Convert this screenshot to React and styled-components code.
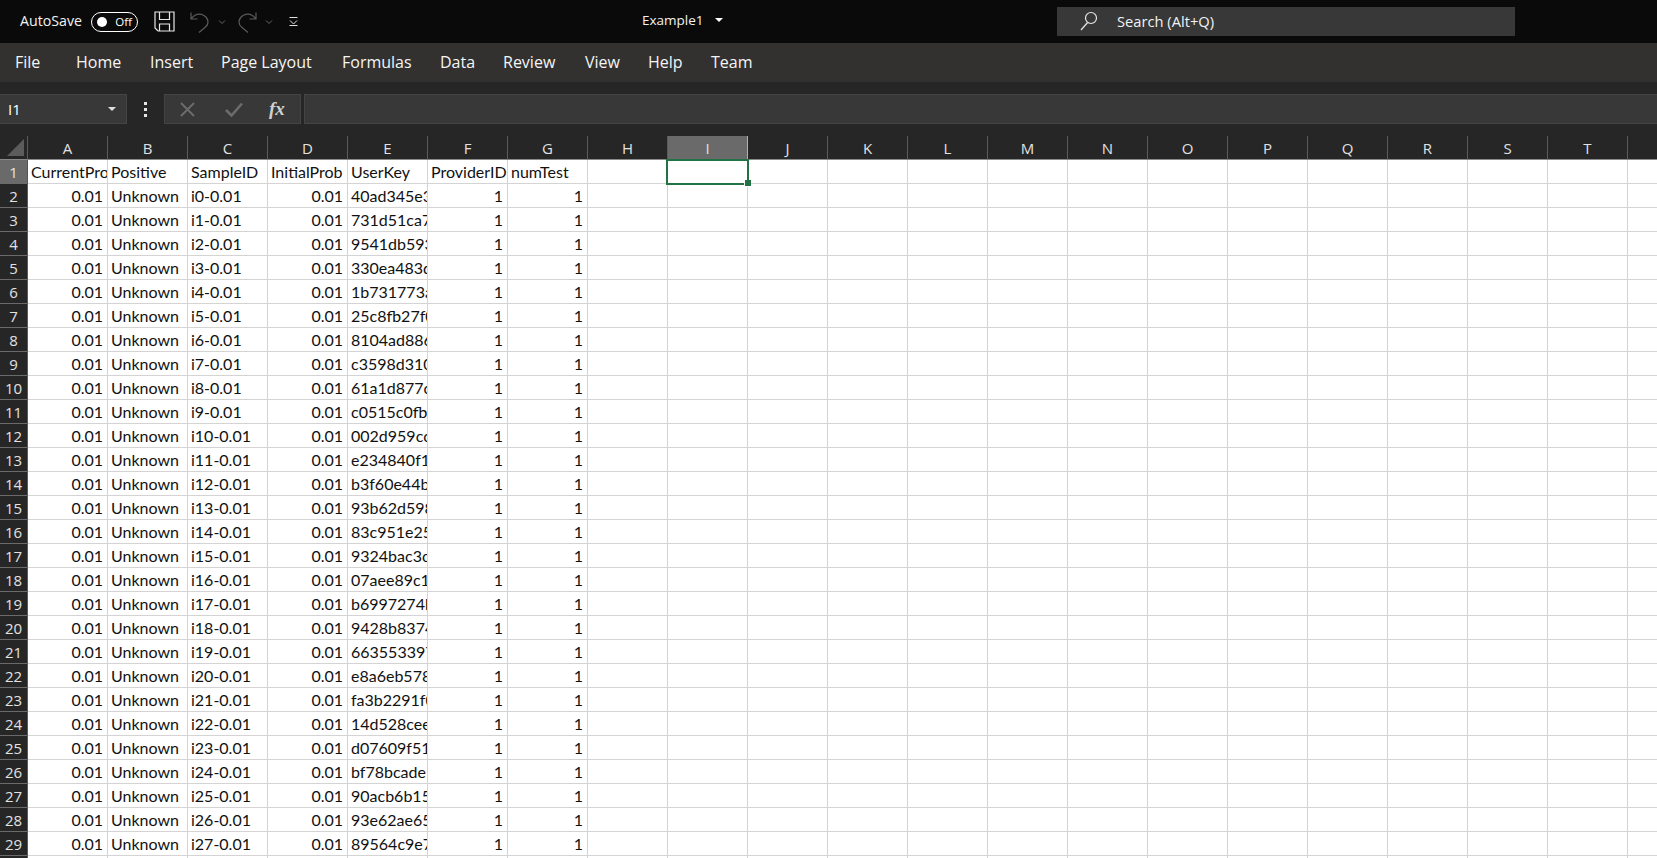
import * as React from "react";
import styled, { createGlobalStyle } from "styled-components";

const GlobalStyle = createGlobalStyle`
  html, body {
    margin: 0;
    padding: 0;
    height: 100%;
    overflow: hidden;
    background: #262626;
  }
`;

const Window = styled.div`
  width: 1657px;
  height: 858px;
  display: flex;
  flex-direction: column;
  overflow: hidden;
  font-family: "Open Sans", "Noto Sans", sans-serif;
  color: #fff;
`;

const TitleBar = styled.div`
  height: 43px;
  flex: none;
  display: flex;
  align-items: center;
  background: #0a0a0a;
  position: relative;
`;

const QuickAccess = styled.div`
  width: 642px;
  flex: none;
  display: flex;
  align-items: center;
  padding-left: 20px;
  box-sizing: border-box;
`;

const AutoSaveLabel = styled.span`
  font-size: 14.2px;
  width: 71px;
  flex: none;
  padding-bottom: 2px;
  color: #f2f2f2;
`;

const Toggle = styled.div`
  width: 47px;
  height: 20px;
  box-sizing: border-box;
  border: 1px solid #fff;
  border-radius: 10px;
  display: flex;
  align-items: center;
  justify-content: space-between;
  padding: 0 5px 0 5px;
  font-size: 11.5px;
  margin-right: 16px;
`;

const ToggleKnob = styled.span`
  width: 10px;
  height: 10px;
  border-radius: 50%;
  background: #fff;
`;

const QuickIcon = styled.svg`
  flex: none;
  display: block;
  margin-right: ${(p) => p.$gap || 0}px;
`;

const DocTitle = styled.div`
  width: 415px;
  flex: none;
  display: flex;
  align-items: center;
  gap: 11px;
  padding-bottom: 3px;
  box-sizing: border-box;
  font-size: 13.5px;
  color: #f2f2f2;
`;

const Caret = styled.span`
  width: 0;
  height: 0;
  border-left: 4px solid transparent;
  border-right: 4px solid transparent;
  border-top: 4px solid ${(p) => p.$color || "#fff"};
`;

const SearchBox = styled.div`
  width: 458px;
  height: 29px;
  display: flex;
  align-items: center;
  gap: 19px;
  padding: 0 0 1px 23px;
  box-sizing: border-box;
  background: #383838;
  font-size: 14.7px;
  color: #f2f2f2;
`;

const TabBar = styled.div`
  height: 39px;
  flex: none;
  display: flex;
  align-items: center;
  background: #323130;
  padding: 0 0 2px 15px;
  box-sizing: border-box;
`;

const Tab = styled.div`
  font-size: 16px;
  color: #f5f5f5;
  width: ${(p) => p.$width}px;
  flex: none;
  white-space: nowrap;
`;

const FormulaArea = styled.div`
  height: 54px;
  flex: none;
  padding-top: 12px;
  box-sizing: border-box;
  display: flex;
  align-items: flex-start;
  background: #262626;
`;

const FieldBox = styled.div`
  height: 30px;
  box-sizing: border-box;
  background: #383838;
  border: 1px solid #444;
  display: flex;
  align-items: center;
`;

const NameBox = styled(FieldBox)`
  width: 127px;
  justify-content: space-between;
  padding: 0 10px 0 8px;
  font-size: 15px;
  border-left: none;
`;

const MoreDots = styled.div`
  width: 37px;
  height: 30px;
  display: flex;
  flex-direction: column;
  align-items: center;
  justify-content: center;
  gap: 3px;
  & > span {
    width: 3px;
    height: 3px;
    background: #e6e6e6;
  }
`;

const FormulaButtons = styled(FieldBox)`
  width: 137px;
  padding-left: 15px;
  margin-right: 3px;
`;

const FxLabel = styled.span`
  font-family: "Liberation Serif", serif;
  font-style: italic;
  font-weight: 700;
  font-size: 19px;
  color: #d0d0d0;
  margin-left: 26px;
`;

const FormulaInput = styled(FieldBox)`
  flex: 1;
  border-right: none;
`;

const Sheet = styled.div`
  flex: 1;
  min-height: 0;
  position: relative;
  display: grid;
  grid-template-columns: 28px repeat(21, 80px);
  grid-auto-rows: 24px;
  overflow: hidden;
  background: #fff;
  font-family: "Lato", "Open Sans", sans-serif;
`;

const Corner = styled.div`
  background: #262626;
  border-right: 1px solid #5a5a5a;
  border-bottom: 1px solid #8a8a8a;
  position: relative;
  &::after {
    content: "";
    position: absolute;
    right: 3px;
    bottom: 3px;
    border-style: solid;
    border-width: 0 0 17px 17px;
    border-color: transparent transparent #5c5c5c transparent;
  }
`;

const ColHead = styled.div`
  background: ${(p) => (p.$active ? "#6a6a6a" : "#262626")};
  border-right: 1px solid ${(p) => (p.$active ? "#b0b0b0" : "#5a5a5a")};
  border-bottom: 1px solid #8a8a8a;
  box-sizing: border-box;
  color: #e2e2e2;
  font-family: "Open Sans", sans-serif;
  font-size: 15px;
  display: flex;
  align-items: center;
  justify-content: center;
  padding-top: 1px;
`;

const RowHead = styled.div`
  background: ${(p) => (p.$active ? "#6a6a6a" : "#262626")};
  border-right: 1px solid ${(p) => (p.$active ? "#217346" : "#5a5a5a")};
  border-bottom: 1px solid #6a6a6a;
  box-sizing: border-box;
  color: #e2e2e2;
  font-family: "Open Sans", sans-serif;
  font-size: 15px;
  display: flex;
  align-items: center;
  justify-content: center;
`;

const Cell = styled.div`
  border-right: 1px solid #d4d4d4;
  border-bottom: 1px solid #d4d4d4;
  box-sizing: border-box;
  color: #111;
  font-size: 16px;
  line-height: 23px;
  white-space: nowrap;
  overflow: hidden;
  text-align: ${(p) => (p.$right ? "right" : "left")};
  padding: ${(p) => (p.$right ? "0 4px 0 0" : "0 0 0 3px")};
`;

const Selection = styled.div`
  position: absolute;
  left: 666px;
  top: 23px;
  width: 83px;
  height: 26px;
  box-sizing: border-box;
  border: 2px solid #217346;
`;

const FillHandle = styled.div`
  position: absolute;
  right: -4px;
  bottom: -4px;
  width: 6px;
  height: 6px;
  background: #217346;
  border: 1px solid #fff;
  border-right: none;
  border-top: none;
`;

const TABS = [
  ["File", 61],
  ["Home", 74],
  ["Insert", 71],
  ["Page Layout", 121],
  ["Formulas", 98],
  ["Data", 63],
  ["Review", 82],
  ["View", 63],
  ["Help", 63],
  ["Team", 60],
];

const COLUMNS = "ABCDEFGHIJKLMNOPQRSTU".split("");
const HEADERS = ["CurrentProb", "Positive", "SampleID", "InitialProb", "UserKey", "ProviderID", "numTest"];

const USER_KEYS = [
  "40ad345e3f", "731d51ca7f", "9541db593a", "330ea483d1", "1b731773a2", "25c8fb27f0", "8104ad8860",
  "c3598d3100", "61a1d877c1", "c0515c0fb2", "002d959cc3", "e234840f1a", "b3f60e44b1", "93b62d5980",
  "83c951e25a", "9324bac3c1", "07aee89c1b", "b6997274b3", "9428b83742", "6635533971", "e8a6eb5780",
  "fa3b2291f0", "14d528cee2", "d07609f51a", "bf78bcade1", "90acb6b151", "93e62ae651", "89564c9e71",
  "a1c2e77b90",
];

const Chevron = ({ gap }) => (
  <QuickIcon $gap={gap} width="8" height="6" viewBox="0 0 8 6">
    <path d="M1 1.5 L4 4.5 L7 1.5" fill="none" stroke="#666" strokeWidth="1" />
  </QuickIcon>
);

const App = () => {
  const blanks = COLUMNS.slice(7);

  return (
    <Window>
      <GlobalStyle />
      <TitleBar>
        <QuickAccess>
          <AutoSaveLabel>AutoSave</AutoSaveLabel>
          <Toggle>
            <ToggleKnob />
            <span>Off</span>
          </Toggle>
          <QuickIcon $gap={15} width="21" height="21" viewBox="0 0 21 21">
            <path d="M1 1 H20 V20 H4 L1 17 Z M5.5 1 V8.5 H15.5 V1 M5.5 20 V13 H15.5 V20" fill="none" stroke="#e8e8e8" strokeWidth="1.2" />
          </QuickIcon>
          <QuickIcon $gap={8} width="20" height="22" viewBox="0 0 20 22">
            <path d="M1 1.5 V8 H7.5 M1.5 7.5 C5 3 10 2.5 14 4.5 C19 7.5 19 13 15.5 16 L9 21.5" fill="none" stroke="#5a5a5a" strokeWidth="1.2" />
          </QuickIcon>
          <Chevron gap={11} />
          <QuickIcon $gap={8} width="20" height="22" viewBox="0 0 20 22">
            <path d="M19 1.5 V8 H12.5 M18.5 7.5 C15 3 10 2.5 6 4.5 C1 7.5 1 13 4.5 16 L11 21.5" fill="none" stroke="#5a5a5a" strokeWidth="1.2" />
          </QuickIcon>
          <Chevron gap={16} />
          <QuickIcon width="9" height="9" viewBox="0 0 9 9">
            <path d="M0.5 0.5 H8.5 M1 3.5 L4.5 7 L8 3.5 M0.5 8.5 H8.5" fill="none" stroke="#e0e0e0" strokeWidth="1" />
          </QuickIcon>
        </QuickAccess>
        <DocTitle>
          <span>Example1</span>
          <Caret />
        </DocTitle>
        <SearchBox>
          <svg width="18" height="20" viewBox="0 0 18 20">
            <circle cx="11" cy="7" r="5.5" fill="none" stroke="#e8e8e8" strokeWidth="1.2" />
            <path d="M7.6 11.5 L1 19" fill="none" stroke="#e8e8e8" strokeWidth="1.2" />
          </svg>
          <span>Search (Alt+Q)</span>
        </SearchBox>
      </TitleBar>

      <TabBar>
        {TABS.map(([name, width]) => (
          <Tab key={name} $width={width}>
            {name}
          </Tab>
        ))}
      </TabBar>

      <FormulaArea>
        <NameBox>
          <span>I1</span>
          <Caret $color="#e0e0e0" />
        </NameBox>
        <MoreDots>
          <span />
          <span />
          <span />
        </MoreDots>
        <FormulaButtons>
          <svg width="15" height="15" viewBox="0 0 15 15">
            <path d="M1 1 L14 14 M14 1 L1 14" stroke="#6b6b6b" strokeWidth="2" fill="none" />
          </svg>
          <svg style={{ marginLeft: 30 }} width="18" height="15" viewBox="0 0 18 15">
            <path d="M1 8 L6.5 13.5 L17 1.5" stroke="#6b6b6b" strokeWidth="2.6" fill="none" />
          </svg>
          <FxLabel>fx</FxLabel>
        </FormulaButtons>
        <FormulaInput />
      </FormulaArea>

      <Sheet>
        <Corner />
        {COLUMNS.map((c) => (
          <ColHead key={c} $active={c === "I"}>
            {c}
          </ColHead>
        ))}

        <RowHead $active>1</RowHead>
        {HEADERS.map((h) => (
          <Cell key={h}>{h}</Cell>
        ))}
        {blanks.map((c) => (
          <Cell key={c} />
        ))}

        {USER_KEYS.map((key, i) => (
          <React.Fragment key={key}>
            <RowHead>{i + 2}</RowHead>
            <Cell $right>0.01</Cell>
            <Cell>Unknown</Cell>
            <Cell>{`i${i}-0.01`}</Cell>
            <Cell $right>0.01</Cell>
            <Cell>{key}</Cell>
            <Cell $right>1</Cell>
            <Cell $right>1</Cell>
            {blanks.map((c) => (
              <Cell key={c} />
            ))}
          </React.Fragment>
        ))}

        <Selection>
          <FillHandle />
        </Selection>
      </Sheet>
    </Window>
  );
};

export default App;
